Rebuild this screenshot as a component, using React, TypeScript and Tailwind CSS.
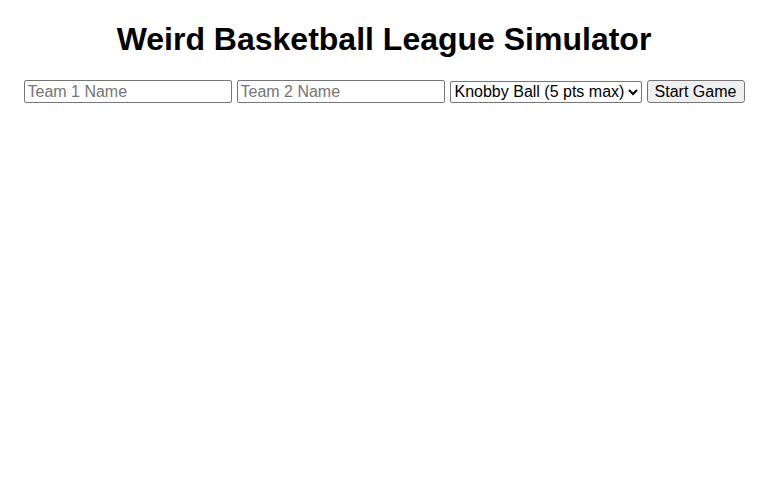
import { useState } from 'react';

const balls = [
	'Knobby Ball (5 pts max)',
	'Square Ball (3 pts max)',
	'Heavy Ball (2 pts max)',
];

export default function App() {
	const [team1, setTeam1] = useState('');
	const [team2, setTeam2] = useState('');
	const [ball, setBall] = useState(balls[0]);

	return (
		<div className="min-h-screen bg-white text-black font-['Liberation_Sans',Arial,sans-serif]">
			<h1 className="text-center text-[32px] font-bold leading-[37px] pt-[21px] mb-[22px]">
				Weird Basketball League Simulator
			</h1>

			<div className="flex justify-center items-center gap-[5px]">
				<input
					value={team1}
					onChange={e => setTeam1(e.target.value)}
					placeholder="Team 1 Name"
					className="w-[208px] h-[23px] border border-[#767676] rounded-[2px] px-[3px] text-[16px] leading-[18px] placeholder:text-[#757575] outline-none"
				/>
				<input
					value={team2}
					onChange={e => setTeam2(e.target.value)}
					placeholder="Team 2 Name"
					className="w-[208px] h-[23px] border border-[#767676] rounded-[2px] px-[3px] text-[16px] leading-[18px] placeholder:text-[#757575] outline-none"
				/>
				<select
					value={ball}
					onChange={e => setBall(e.target.value)}
					className="h-[22px] border border-[#767676] rounded-[2px] px-0 text-[16px] leading-[18px] bg-white"
				>
					{balls.map(b => (
						<option key={b} value={b}>{b}</option>
					))}
				</select>
				<button className="w-[98px] h-[23px] border border-[#767676] rounded-[3px] bg-[#efefef] text-[16px] leading-[18px] px-[6px]">
					Start Game
				</button>
			</div>
		</div>
	);
}
